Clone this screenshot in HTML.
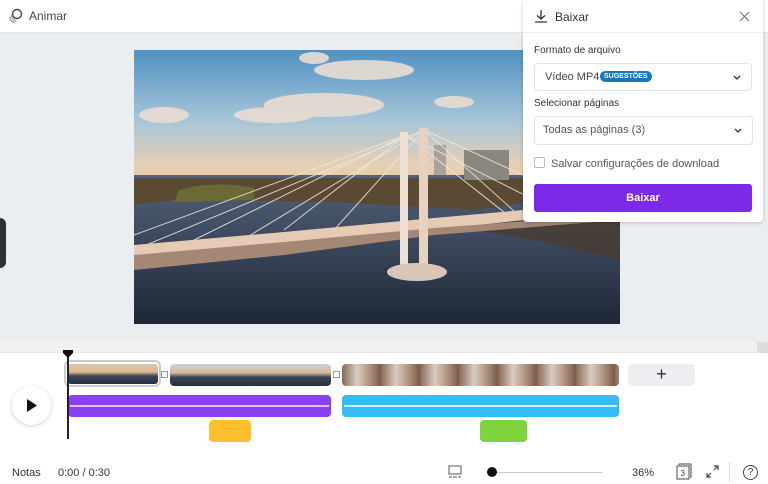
<!DOCTYPE html>
<html><head><meta charset="utf-8"><style>
*{box-sizing:border-box;margin:0;padding:0}
body{width:768px;height:484px;overflow:hidden;background:#fff;font-family:"Liberation Sans",sans-serif;position:relative;color:#333}
.abs{position:absolute}
</style></head><body>
<div class="abs" style="left:0;top:0;width:768px;height:33px;background:#fff;border-bottom:1px solid #e3e6ea"></div>
<svg class="abs" style="left:7px;top:8px" width="16" height="16" viewBox="0 0 16 16"><circle cx="10" cy="6" r="4.5" fill="none" stroke="#444" stroke-width="1.4"/><path d="M5 6.5a5 5 0 0 0 4.5 6.5M3 8.5a5 5 0 0 0 4.5 6" fill="none" stroke="#999" stroke-width="1.2"/></svg>
<div class="abs" style="left:29px;top:9px;font-size:12px;color:#444">Animar</div>
<div class="abs" style="left:0;top:33px;width:768px;height:309px;background:#ebeef1"></div>
<div class="abs" style="left:0;top:218px;width:6px;height:50px;background:#2b2f36;border-radius:0 6px 6px 0"></div>
<svg class="abs" style="left:134px;top:50px" width="486" height="274" viewBox="0 0 486 274">
<defs><linearGradient id="sky" x1="0" y1="0" x2="0" y2="1"><stop offset="0" stop-color="#4f92c4"/><stop offset="0.55" stop-color="#a9c6d8"/><stop offset="0.9" stop-color="#e8d0b4"/><stop offset="1" stop-color="#e9c8a4"/></linearGradient>
<linearGradient id="wat" x1="0" y1="0" x2="0" y2="1"><stop offset="0" stop-color="#52627a"/><stop offset="1" stop-color="#1f2736"/></linearGradient></defs>
<rect width="486" height="130" fill="url(#sky)"/>
<g fill="#e9ddd2" opacity="0.9"><ellipse cx="230" cy="20" rx="50" ry="10"/><ellipse cx="190" cy="55" rx="60" ry="12"/><ellipse cx="140" cy="65" rx="40" ry="8"/><ellipse cx="30" cy="65" rx="25" ry="8"/><ellipse cx="320" cy="52" rx="20" ry="6"/><ellipse cx="180" cy="8" rx="15" ry="6"/></g>
<rect y="125" width="486" height="149" fill="url(#wat)"/>
<path d="M0 128H486V140L340 160L200 152L40 150L0 155Z" fill="#5a4a34"/>
<path d="M45 140Q80 130 120 138L120 150L40 152Z" fill="#6b6a36"/>
<rect x="330" y="100" width="45" height="30" fill="#8a8680"/><rect x="300" y="95" width="12" height="30" fill="#a9a39c"/>
<path d="M310 175L486 165V210L400 190Z" fill="#4a3a2a" opacity="0.7"/>
<g stroke="#f2e6dc" stroke-width="1" opacity="0.85"><path d="M272 85L0 185M272 85L60 190M272 85L150 180M290 80L0 200M290 80L100 195M290 80L200 180M272 85L380 170M290 80L390 170M290 80L470 162M272 85L430 165"/></g>
<path d="M0 195L150 182L300 168L390 160L486 158V165L390 170L300 180L150 200L0 215Z" fill="#e6cbb4"/>
<path d="M0 205L150 192L300 178L486 164V170L300 185L150 205L0 220Z" fill="#a58775"/>
<rect x="266" y="82" width="8" height="145" fill="#efe0d4"/><rect x="285" y="78" width="9" height="150" fill="#e7d2c2"/>
<ellipse cx="283" cy="222" rx="30" ry="9" fill="#d9c6b8"/>
</svg>
<div class="abs" style="left:0;top:342px;width:768px;height:11px;background:#f1f1f1;border-bottom:1px solid #e5e5e5"></div>
<div class="abs" style="left:757px;top:342px;width:11px;height:11px;background:#ddd"></div>
<div class="abs" style="left:523px;top:0;width:240px;height:222px;background:#fff;box-shadow:0 1px 4px rgba(0,0,0,.2);border-radius:0 0 4px 4px"></div>
<svg class="abs" style="left:534px;top:9px" width="14" height="14" viewBox="0 0 14 14"><path d="M7 1V10M3 6.5L7 10L11 6.5M1 13H13" fill="none" stroke="#333" stroke-width="1.3"/></svg>
<div class="abs" style="left:555px;top:10px;font-size:12px;color:#333">Baixar</div>
<svg class="abs" style="left:739px;top:11px" width="11" height="11" viewBox="0 0 11 11"><path d="M1 1L10 10M10 1L1 10" stroke="#777" stroke-width="1.2"/></svg>
<div class="abs" style="left:523px;top:32px;width:240px;height:1px;background:#ececec"></div>
<div class="abs" style="left:534px;top:45px;font-size:10px;color:#333">Formato de arquivo</div>
<div class="abs" style="left:534px;top:63px;width:218px;height:28px;border:1px solid #e1e3e6;border-radius:4px"></div>
<div class="abs" style="left:545px;top:71px;font-size:11px;color:#444">Vídeo MP4</div>
<div class="abs" style="left:600px;top:71px;height:11px;padding:0 4px;background:#1778c0;color:#fff;font-size:7px;font-weight:bold;line-height:11px;border-radius:6px">SUGESTÕES</div>
<svg class="abs" style="left:733px;top:75px" width="8" height="6" viewBox="0 0 8 6"><path d="M1 1L4 4L7 1" fill="none" stroke="#333" stroke-width="1.3"/></svg>
<div class="abs" style="left:534px;top:98px;font-size:10px;color:#333">Selecionar páginas</div>
<div class="abs" style="left:534px;top:116px;width:219px;height:29px;border:1px solid #e1e3e6;border-radius:4px"></div>
<div class="abs" style="left:543px;top:124px;font-size:11px;color:#555">Todas as páginas (3)</div>
<svg class="abs" style="left:734px;top:128px" width="8" height="6" viewBox="0 0 8 6"><path d="M1 1L4 4L7 1" fill="none" stroke="#333" stroke-width="1.3"/></svg>
<div class="abs" style="left:534px;top:157px;width:11px;height:11px;border:1px solid #bbb;border-radius:2px"></div>
<div class="abs" style="left:551px;top:158px;font-size:11px;color:#555">Salvar configurações de download</div>
<div class="abs" style="left:534px;top:184px;width:218px;height:28px;background:#7d2ae8;border-radius:3px;color:#fff;font-size:11px;font-weight:bold;text-align:center;line-height:28px">Baixar</div>
<div class="abs" style="left:12px;top:386px;width:39px;height:39px;border-radius:50%;background:#fff;box-shadow:0 1px 4px rgba(0,0,0,.2)"></div>
<svg class="abs" style="left:26px;top:399px" width="11" height="13" viewBox="0 0 11 13"><path d="M1 0L11 6.5L1 13Z" fill="#111"/></svg>
<div class="abs" style="left:64px;top:360px;width:97px;height:27px;border:2px solid #c9cdd2;border-radius:6px"></div>
<div class="abs" style="left:68px;top:364px;width:90px;height:20px;border-radius:3px;background:linear-gradient(#d8c8b0 0,#e0b890 40%,#3b4555 60%,#283040 100%)"></div>
<div class="abs" style="left:170px;top:364px;width:161px;height:22px;border-radius:4px;background:linear-gradient(#c5d2dc 0,#dcb894 40%,#3b4555 60%,#283040 100%)"></div>
<div class="abs" style="left:342px;top:364px;width:277px;height:22px;border-radius:4px;background:repeating-linear-gradient(90deg,#8a6a55 0,#d8ccc2 15px,#b59a86 26px,#7a5a48 39px)"></div>
<div class="abs" style="left:161px;top:371px;width:7px;height:7px;border:1px solid #999;background:#fff"></div>
<div class="abs" style="left:333px;top:371px;width:7px;height:7px;border:1px solid #999;background:#fff"></div>
<div class="abs" style="left:628px;top:364px;width:67px;height:22px;background:#eceef1;border-radius:5px;text-align:center;font-size:18px;line-height:21px;color:#333">+</div>
<div class="abs" style="left:68px;top:395px;width:263px;height:22px;background:#8b3ff2;border-radius:4px"></div>
<div class="abs" style="left:70px;top:405px;width:259px;height:2px;background:#d8c4fb"></div>
<div class="abs" style="left:342px;top:395px;width:277px;height:22px;background:#33bdf8;border-radius:4px"></div>
<div class="abs" style="left:344px;top:405px;width:273px;height:2px;background:#c9eefc"></div>
<div class="abs" style="left:209px;top:420px;width:42px;height:22px;background:#fdbf2d;border-radius:4px"></div>
<div class="abs" style="left:480px;top:420px;width:47px;height:22px;background:#7fd33b;border-radius:4px"></div>
<div class="abs" style="left:67px;top:355px;width:2px;height:84px;background:#222"></div>
<svg class="abs" style="left:63px;top:350px" width="10" height="8" viewBox="0 0 10 8"><path d="M0 0H10V3L5 8L0 3Z" fill="#111"/></svg>
<div class="abs" style="left:12px;top:467px;font-size:11px;color:#333">Notas</div>
<div class="abs" style="left:58px;top:467px;font-size:11px;color:#333">0:00 / 0:30</div>
<svg class="abs" style="left:448px;top:465px" width="14" height="14" viewBox="0 0 14 14"><rect x="1" y="1" width="12" height="8" fill="none" stroke="#555"/><path d="M1 12H4M5 12H9M10 12H13" stroke="#555"/></svg>
<div class="abs" style="left:488px;top:472px;width:115px;height:1px;background:#ccc"></div>
<div class="abs" style="left:487px;top:467px;width:10px;height:10px;border-radius:50%;background:#111"></div>
<div class="abs" style="left:632px;top:467px;font-size:11px;color:#333">36%</div>
<svg class="abs" style="left:676px;top:463px" width="17" height="17" viewBox="0 0 17 17"><rect x="1" y="3" width="12" height="13" fill="#fff" stroke="#444"/><path d="M3 2V1H15V14H14" fill="none" stroke="#444"/><text x="4.5" y="13" font-size="8" font-family="Liberation Sans" fill="#333">3</text></svg>
<svg class="abs" style="left:706px;top:465px" width="13" height="13" viewBox="0 0 13 13"><path d="M8 1H12V5M12 1L8 5M5 12H1V8M1 12L5 8" fill="none" stroke="#444" stroke-width="1.2"/></svg>
<div class="abs" style="left:729px;top:462px;width:1px;height:20px;background:#ddd"></div>
<div class="abs" style="left:743px;top:465px;width:15px;height:15px;border:1.3px solid #444;border-radius:50%;font-size:10px;text-align:center;line-height:13px;color:#333">?</div>
</body></html>
